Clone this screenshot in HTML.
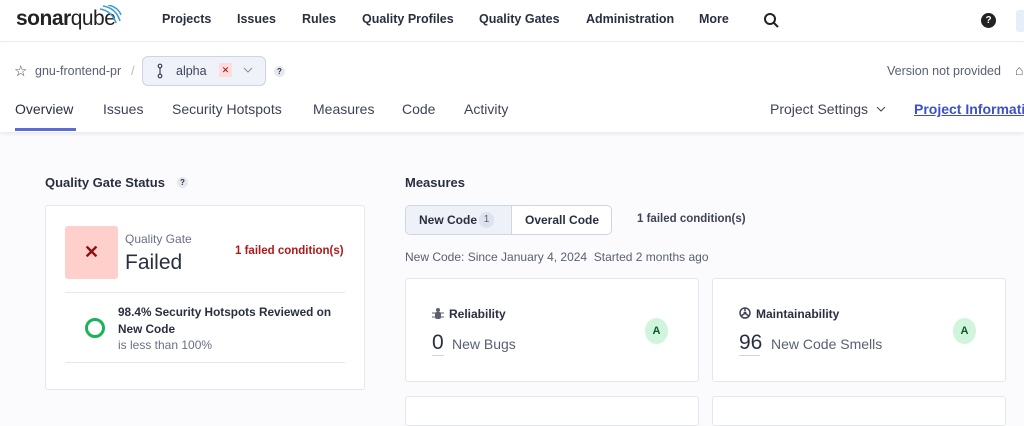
<!DOCTYPE html><html><head><style>
*{box-sizing:border-box;margin:0;padding:0}
body{width:1024px;height:416px;overflow:hidden;background:#fbfbfd;font-family:"Liberation Sans",sans-serif;color:#2a2f40;position:relative}
.a{position:absolute;white-space:nowrap}
#top{position:absolute;left:0;top:0;width:1024px;height:42px;background:#fff;border-bottom:1px solid #eceef2}
#sub{position:absolute;left:0;top:42px;width:1024px;height:90px;background:#fff;box-shadow:0 2px 4px rgba(0,0,0,.08)}
.nav{font-size:12.5px;font-weight:bold;color:#2a2f40;top:12px}
.tab{font-size:14px;color:#3e4357;top:101px}
.card{position:absolute;background:#fff;border:1px solid #e4e7ee;border-radius:3px}
</style></head><body>
<div id="top"></div><div id="sub"></div>
<div class="a" style="left:16px;top:7px;font-size:21px;font-weight:bold;color:#222;letter-spacing:-0.5px">sonar<span style="font-weight:normal">qube</span></div>
<svg class="a" style="left:98px;top:5px" width="24" height="22"><path d="M2 4 Q14 6 18 18 M5 1 Q18 3 22 16 M10 0 Q20 2 23 10" stroke="#3f9bd6" stroke-width="1.6" fill="none"/></svg>
<div class="a nav" style="left:162px">Projects</div>
<div class="a nav" style="left:237px">Issues</div>
<div class="a nav" style="left:302px">Rules</div>
<div class="a nav" style="left:362px">Quality Profiles</div>
<div class="a nav" style="left:479px">Quality Gates</div>
<div class="a nav" style="left:586px">Administration</div>
<div class="a nav" style="left:699px">More</div>
<svg class="a" style="left:763px;top:12px" width="16" height="16"><circle cx="7" cy="7" r="5" stroke="#222" stroke-width="2" fill="none"/><path d="M11 11l4 4" stroke="#222" stroke-width="2"/></svg>
<div class="a" style="left:981px;top:13px;width:15px;height:15px;border-radius:50%;background:#222;color:#fff;font-size:10px;font-weight:bold;text-align:center;line-height:15px">?</div>
<div class="a" style="left:1016px;top:10px;width:10px;height:22px;background:#e8eef8;border-radius:3px"></div>
<div class="a" style="left:14px;top:62px;font-size:15px;color:#3e4357">☆</div>
<div class="a" style="left:35px;top:64px;font-size:12.5px;color:#5a6072">gnu-frontend-pr</div>
<div class="a" style="left:131px;top:63px;font-size:13px;color:#b8bcc8">/</div>
<div class="a" style="left:142px;top:56px;width:124px;height:30px;border:1px solid #cdd4e4;border-radius:6px;background:#eff2f9"></div>
<svg class="a" style="left:156px;top:63px" width="8" height="16"><circle cx="4" cy="3" r="1.8" stroke="#3e4357" fill="none" stroke-width="1.2"/><circle cx="4" cy="13" r="1.8" stroke="#3e4357" fill="none" stroke-width="1.2"/><path d="M4 5v6" stroke="#3e4357" stroke-width="1.2"/></svg>
<div class="a" style="left:176px;top:64px;font-size:12.5px;color:#3e4357">alpha</div>
<div class="a" style="left:219px;top:63px;width:13px;height:14px;background:#fdd;color:#a00;font-size:9px;text-align:center;line-height:14px">✕</div>
<svg class="a" style="left:243px;top:67px" width="10" height="6"><path d="M1 1l4 4 4-4" stroke="#8a90a0" fill="none"/></svg>
<div class="a" style="left:274px;top:66px;width:11px;height:11px;border-radius:50%;background:#e6e8ee;font-size:8px;font-weight:bold;text-align:center;line-height:11px">?</div>
<div class="a" style="left:887px;top:64px;font-size:12.5px;color:#5a6072">Version not provided</div>
<div class="a" style="left:1015px;top:62px;font-size:14px;color:#5a6072">⌂</div>
<div class="a tab" style="left:15px;color:#2a2f40;font-weight:500">Overview</div>
<div class="a" style="left:15px;top:128px;width:61px;height:3px;background:#5d6cd0"></div>
<div class="a tab" style="left:103px">Issues</div>
<div class="a tab" style="left:172px">Security Hotspots</div>
<div class="a tab" style="left:313px">Measures</div>
<div class="a tab" style="left:402px">Code</div>
<div class="a tab" style="left:464px">Activity</div>
<div class="a tab" style="left:770px">Project Settings</div>
<svg class="a" style="left:876px;top:106px" width="10" height="6"><path d="M1 1l4 4 4-4" stroke="#3e4357" fill="none"/></svg>
<div class="a tab" style="left:914px;color:#3d50c8;font-weight:bold;text-decoration:underline">Project Information</div>
<div class="a" style="left:45px;top:175px;font-size:13px;font-weight:bold">Quality Gate Status</div>
<div class="a" style="left:177px;top:177px;width:11px;height:11px;border-radius:50%;background:#e6e8ee;font-size:8px;font-weight:bold;text-align:center;line-height:11px">?</div>
<div class="card" style="left:45px;top:205px;width:320px;height:185px"></div>
<div class="a" style="left:65px;top:226px;width:53px;height:53px;background:#fecfcb;border-radius:3px;color:#8a1010;font-size:18px;font-weight:bold;text-align:center;line-height:53px">✕</div>
<div class="a" style="left:125px;top:232px;font-size:12px;color:#6a7085">Quality Gate</div>
<div class="a" style="left:125px;top:251px;font-size:21px;color:#2a2f40">Failed</div>
<div class="a" style="left:235px;top:245px;font-size:11.5px;color:#b01818;font-weight:bold">1 failed condition(s)</div>
<div class="a" style="left:65px;top:292px;width:280px;height:1px;background:#e6e8ee"></div>
<div class="a" style="left:85px;top:318px;width:20px;height:20px;border:3px solid #1ab25a;border-radius:50%"></div>
<div class="a" style="left:118px;top:304px;font-size:11.8px;font-weight:bold;line-height:17px;color:#2a2f40;white-space:normal;width:230px">98.4% Security Hotspots Reviewed on New Code</div>
<div class="a" style="left:118px;top:338px;font-size:12px;color:#6a7085">is less than 100%</div>
<div class="a" style="left:65px;top:362px;width:280px;height:1px;background:#e6e8ee"></div>
<div class="a" style="left:405px;top:175px;font-size:13px;font-weight:bold">Measures</div>
<div class="a" style="left:405px;top:205px;width:207px;height:30px;border:1px solid #cdd4e4;border-radius:5px;background:#fff;overflow:hidden"><div style="width:106px;height:30px;background:#eef1f8;border-right:1px solid #cdd4e4"></div></div>
<div class="a" style="left:419px;top:213px;font-size:12px;font-weight:bold">New Code</div>
<div class="a" style="left:479px;top:212px;width:15px;height:16px;border-radius:8px;background:#dde2ee;font-size:10px;text-align:center;line-height:16px;color:#5a6072">1</div>
<div class="a" style="left:525px;top:213px;font-size:12px;font-weight:bold">Overall Code</div>
<div class="a" style="left:637px;top:213px;font-size:11.5px;color:#3e4357;font-weight:bold">1 failed condition(s)</div>
<div class="a" style="left:405px;top:250px;font-size:12px;color:#5a6072">New Code: Since January 4, 2024 &nbsp;Started 2 months ago</div>
<div class="card" style="left:405px;top:278px;width:294px;height:104px"></div>
<div class="card" style="left:712px;top:278px;width:294px;height:104px"></div>
<div class="card" style="left:405px;top:396px;width:294px;height:30px"></div>
<div class="card" style="left:712px;top:396px;width:294px;height:30px"></div>
<svg class="a" style="left:432px;top:307px" width="12" height="13"><circle cx="6" cy="3" r="2" fill="#5a6072"/><rect x="3" y="5" width="6" height="7" rx="2" fill="#5a6072"/><path d="M0 6h12M0 10h3M9 10h3" stroke="#5a6072"/></svg>
<div class="a" style="left:449px;top:307px;font-size:12px;font-weight:bold">Reliability</div>
<div class="a" style="left:432px;top:331px;font-size:21px;color:#2a2f40">0</div>
<div class="a" style="left:432px;top:355px;width:12px;height:1px;background:#cdd4e4"></div>
<div class="a" style="left:452px;top:336px;font-size:14px;color:#5a6072">New Bugs</div>
<div class="a" style="left:645px;top:318px;width:23px;height:26px;border-radius:50%;background:#d0f5dc;color:#0a5a25;font-size:11px;font-weight:bold;text-align:center;line-height:26px">A</div>
<svg class="a" style="left:739px;top:307px" width="12" height="12"><circle cx="6" cy="6" r="5" stroke="#3e4357" stroke-width="1.5" fill="none"/><circle cx="6" cy="6" r="1.5" fill="#3e4357"/><path d="M6 1v3M2 9l3-2M10 9l-3-2" stroke="#3e4357" stroke-width="1.5"/></svg>
<div class="a" style="left:756px;top:307px;font-size:12px;font-weight:bold">Maintainability</div>
<div class="a" style="left:739px;top:331px;font-size:21px;color:#2a2f40">96</div>
<div class="a" style="left:739px;top:355px;width:21px;height:1px;background:#cdd4e4"></div>
<div class="a" style="left:771px;top:336px;font-size:14px;color:#5a6072">New Code Smells</div>
<div class="a" style="left:953px;top:318px;width:23px;height:26px;border-radius:50%;background:#d0f5dc;color:#0a5a25;font-size:11px;font-weight:bold;text-align:center;line-height:26px">A</div>
</body></html>
